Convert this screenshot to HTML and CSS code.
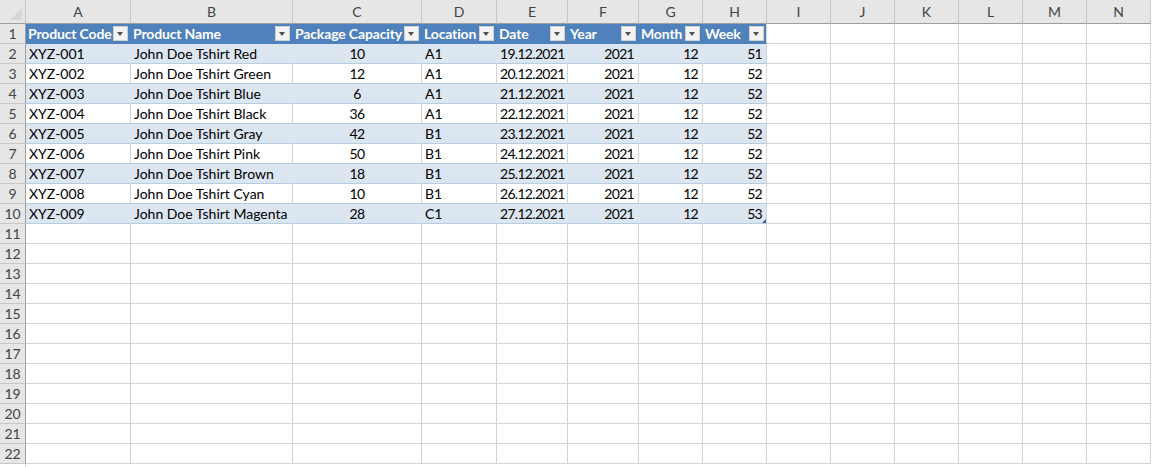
FILE: index.html
```html
<!DOCTYPE html>
<html lang="en">
<head>
<meta charset="utf-8">
<title>Products</title>
<link rel="stylesheet" href="styles.css">
</head>
<body>
<div class="sheet">
  <div class="row colhead">
    <div class="corner"><svg width="12" height="12" viewBox="0 0 12 12"><polygon points="12,0 12,12 0,12" fill="#d6d6d6"/></svg></div>
    <div class="ch">A</div><div class="ch">B</div><div class="ch">C</div><div class="ch">D</div><div class="ch">E</div><div class="ch">F</div><div class="ch">G</div><div class="ch">H</div><div class="ch">I</div><div class="ch">J</div><div class="ch">K</div><div class="ch">L</div><div class="ch">M</div><div class="ch">N</div><div class="ch">O</div>
  </div>

  <div class="row">
    <div class="rh">1</div>
    <div class="th"><span>Product Code</span><span class="dd"></span></div>
    <div class="th"><span>Product Name</span><span class="dd"></span></div>
    <div class="th"><span>Package Capacity</span><span class="dd"></span></div>
    <div class="th"><span>Location</span><span class="dd"></span></div>
    <div class="th"><span>Date</span><span class="dd"></span></div>
    <div class="th"><span>Year</span><span class="dd"></span></div>
    <div class="th"><span>Month</span><span class="dd"></span></div>
    <div class="th last"><span>Week</span><span class="dd"></span></div>
    <div class="c"></div><div class="c"></div><div class="c"></div><div class="c"></div><div class="c"></div><div class="c"></div><div class="c"></div>
  </div>

  <div class="row band">
    <div class="rh">2</div>
    <div class="t">XYZ-001</div><div class="t">John Doe Tshirt Red</div><div class="t mid">10</div><div class="t">A1</div><div class="t num">19.12.2021</div><div class="t num">2021</div><div class="t num">12</div><div class="t num last">51</div>
    <div class="c"></div><div class="c"></div><div class="c"></div><div class="c"></div><div class="c"></div><div class="c"></div><div class="c"></div>
  </div>
  <div class="row">
    <div class="rh">3</div>
    <div class="t">XYZ-002</div><div class="t">John Doe Tshirt Green</div><div class="t mid">12</div><div class="t">A1</div><div class="t num">20.12.2021</div><div class="t num">2021</div><div class="t num">12</div><div class="t num last">52</div>
    <div class="c"></div><div class="c"></div><div class="c"></div><div class="c"></div><div class="c"></div><div class="c"></div><div class="c"></div>
  </div>
  <div class="row band">
    <div class="rh">4</div>
    <div class="t">XYZ-003</div><div class="t">John Doe Tshirt Blue</div><div class="t mid">6</div><div class="t">A1</div><div class="t num">21.12.2021</div><div class="t num">2021</div><div class="t num">12</div><div class="t num last">52</div>
    <div class="c"></div><div class="c"></div><div class="c"></div><div class="c"></div><div class="c"></div><div class="c"></div><div class="c"></div>
  </div>
  <div class="row">
    <div class="rh">5</div>
    <div class="t">XYZ-004</div><div class="t">John Doe Tshirt Black</div><div class="t mid">36</div><div class="t">A1</div><div class="t num">22.12.2021</div><div class="t num">2021</div><div class="t num">12</div><div class="t num last">52</div>
    <div class="c"></div><div class="c"></div><div class="c"></div><div class="c"></div><div class="c"></div><div class="c"></div><div class="c"></div>
  </div>
  <div class="row band">
    <div class="rh">6</div>
    <div class="t">XYZ-005</div><div class="t">John Doe Tshirt Gray</div><div class="t mid">42</div><div class="t">B1</div><div class="t num">23.12.2021</div><div class="t num">2021</div><div class="t num">12</div><div class="t num last">52</div>
    <div class="c"></div><div class="c"></div><div class="c"></div><div class="c"></div><div class="c"></div><div class="c"></div><div class="c"></div>
  </div>
  <div class="row">
    <div class="rh">7</div>
    <div class="t">XYZ-006</div><div class="t">John Doe Tshirt Pink</div><div class="t mid">50</div><div class="t">B1</div><div class="t num">24.12.2021</div><div class="t num">2021</div><div class="t num">12</div><div class="t num last">52</div>
    <div class="c"></div><div class="c"></div><div class="c"></div><div class="c"></div><div class="c"></div><div class="c"></div><div class="c"></div>
  </div>
  <div class="row band">
    <div class="rh">8</div>
    <div class="t">XYZ-007</div><div class="t">John Doe Tshirt Brown</div><div class="t mid">18</div><div class="t">B1</div><div class="t num">25.12.2021</div><div class="t num">2021</div><div class="t num">12</div><div class="t num last">52</div>
    <div class="c"></div><div class="c"></div><div class="c"></div><div class="c"></div><div class="c"></div><div class="c"></div><div class="c"></div>
  </div>
  <div class="row">
    <div class="rh">9</div>
    <div class="t">XYZ-008</div><div class="t">John Doe Tshirt Cyan</div><div class="t mid">10</div><div class="t">B1</div><div class="t num">26.12.2021</div><div class="t num">2021</div><div class="t num">12</div><div class="t num last">52</div>
    <div class="c"></div><div class="c"></div><div class="c"></div><div class="c"></div><div class="c"></div><div class="c"></div><div class="c"></div>
  </div>
  <div class="row band">
    <div class="rh">10</div>
    <div class="t">XYZ-009</div><div class="t">John Doe Tshirt Magenta</div><div class="t mid">28</div><div class="t">C1</div><div class="t num">27.12.2021</div><div class="t num">2021</div><div class="t num">12</div><div class="t num last end">53</div>
    <div class="c"></div><div class="c"></div><div class="c"></div><div class="c"></div><div class="c"></div><div class="c"></div><div class="c"></div>
  </div>

  <div class="row"><div class="rh">11</div><div class="c"></div><div class="c"></div><div class="c"></div><div class="c"></div><div class="c"></div><div class="c"></div><div class="c"></div><div class="c"></div><div class="c"></div><div class="c"></div><div class="c"></div><div class="c"></div><div class="c"></div><div class="c"></div><div class="c"></div></div>
  <div class="row"><div class="rh">12</div><div class="c"></div><div class="c"></div><div class="c"></div><div class="c"></div><div class="c"></div><div class="c"></div><div class="c"></div><div class="c"></div><div class="c"></div><div class="c"></div><div class="c"></div><div class="c"></div><div class="c"></div><div class="c"></div><div class="c"></div></div>
  <div class="row"><div class="rh">13</div><div class="c"></div><div class="c"></div><div class="c"></div><div class="c"></div><div class="c"></div><div class="c"></div><div class="c"></div><div class="c"></div><div class="c"></div><div class="c"></div><div class="c"></div><div class="c"></div><div class="c"></div><div class="c"></div><div class="c"></div></div>
  <div class="row"><div class="rh">14</div><div class="c"></div><div class="c"></div><div class="c"></div><div class="c"></div><div class="c"></div><div class="c"></div><div class="c"></div><div class="c"></div><div class="c"></div><div class="c"></div><div class="c"></div><div class="c"></div><div class="c"></div><div class="c"></div><div class="c"></div></div>
  <div class="row"><div class="rh">15</div><div class="c"></div><div class="c"></div><div class="c"></div><div class="c"></div><div class="c"></div><div class="c"></div><div class="c"></div><div class="c"></div><div class="c"></div><div class="c"></div><div class="c"></div><div class="c"></div><div class="c"></div><div class="c"></div><div class="c"></div></div>
  <div class="row"><div class="rh">16</div><div class="c"></div><div class="c"></div><div class="c"></div><div class="c"></div><div class="c"></div><div class="c"></div><div class="c"></div><div class="c"></div><div class="c"></div><div class="c"></div><div class="c"></div><div class="c"></div><div class="c"></div><div class="c"></div><div class="c"></div></div>
  <div class="row"><div class="rh">17</div><div class="c"></div><div class="c"></div><div class="c"></div><div class="c"></div><div class="c"></div><div class="c"></div><div class="c"></div><div class="c"></div><div class="c"></div><div class="c"></div><div class="c"></div><div class="c"></div><div class="c"></div><div class="c"></div><div class="c"></div></div>
  <div class="row"><div class="rh">18</div><div class="c"></div><div class="c"></div><div class="c"></div><div class="c"></div><div class="c"></div><div class="c"></div><div class="c"></div><div class="c"></div><div class="c"></div><div class="c"></div><div class="c"></div><div class="c"></div><div class="c"></div><div class="c"></div><div class="c"></div></div>
  <div class="row"><div class="rh">19</div><div class="c"></div><div class="c"></div><div class="c"></div><div class="c"></div><div class="c"></div><div class="c"></div><div class="c"></div><div class="c"></div><div class="c"></div><div class="c"></div><div class="c"></div><div class="c"></div><div class="c"></div><div class="c"></div><div class="c"></div></div>
  <div class="row"><div class="rh">20</div><div class="c"></div><div class="c"></div><div class="c"></div><div class="c"></div><div class="c"></div><div class="c"></div><div class="c"></div><div class="c"></div><div class="c"></div><div class="c"></div><div class="c"></div><div class="c"></div><div class="c"></div><div class="c"></div><div class="c"></div></div>
  <div class="row"><div class="rh">21</div><div class="c"></div><div class="c"></div><div class="c"></div><div class="c"></div><div class="c"></div><div class="c"></div><div class="c"></div><div class="c"></div><div class="c"></div><div class="c"></div><div class="c"></div><div class="c"></div><div class="c"></div><div class="c"></div><div class="c"></div></div>
  <div class="row"><div class="rh">22</div><div class="c"></div><div class="c"></div><div class="c"></div><div class="c"></div><div class="c"></div><div class="c"></div><div class="c"></div><div class="c"></div><div class="c"></div><div class="c"></div><div class="c"></div><div class="c"></div><div class="c"></div><div class="c"></div><div class="c"></div></div>
</div>
</body>
</html>
```

FILE: styles.css
```css
html, body {
  margin: 0;
  padding: 0;
  background: #ffffff;
  overflow: hidden;
}

.sheet {
  width: 1156px;
  height: 467px;
  overflow: hidden;
  font-family: Lato, "Liberation Sans", sans-serif;
  font-size: 14px;
  color: #000000;
}

/* every row shares the same column widths */
.row {
  display: grid;
  grid-template-columns: 26px 105px 162px 129px 75px 71px 71px 64px 64px 64px 64px 64px 64px 64px 64px;
  height: 20px;
}

.row > div {
  box-sizing: border-box;
  height: 20px;
  border-right: 1px solid #d4d4d4;
  border-bottom: 1px solid #d4d4d4;
  line-height: 19px;
  white-space: nowrap;
  overflow: hidden;
}

/* column letters */
.colhead {
  height: 24px;
}

.colhead > div {
  height: 24px;
  line-height: 23px;
  background: #e6e6e6;
  border-right: 1px solid #c8c8c8;
  border-bottom: 1px solid #9e9e9e;
  color: #444444;
  text-align: center;
}

.corner {
  display: flex;
  align-items: flex-end;
  justify-content: flex-end;
  padding: 0 3px 3px 0;
}

.corner svg {
  display: block;
}

/* row numbers */
.row > .rh {
  background: #e6e6e6;
  border-right: 1px solid #9e9e9e;
  border-bottom: 1px solid #c8c8c8;
  color: #444444;
  text-align: center;
}

/* table header */
.row > .th {
  display: flex;
  align-items: center;
  justify-content: space-between;
  background: #4f81bd;
  border-right-color: #4f81bd;
  border-bottom-color: #4f81bd;
  color: #ffffff;
  font-weight: bold;
  letter-spacing: -0.15px;
  padding-left: 2px;
  padding-right: 2px;
}

.row > .th.last {
  border-right-color: #d4d4d4;
}

.dd {
  flex: none;
  position: relative;
  width: 15px;
  height: 15px;
  box-sizing: border-box;
  background: #f3f3f3;
  border: 1px solid #d0d0d0;
}

.dd::after {
  content: "";
  position: absolute;
  left: 3px;
  top: 5px;
  border-left: 3.5px solid transparent;
  border-right: 3.5px solid transparent;
  border-top: 4px solid #505050;
}

/* table body */
.row > .t {
  padding: 0 3px;
  border-bottom-color: #b8cce4;
}

.row > .num {
  text-align: right;
  letter-spacing: -0.7px;
  padding-right: 4px;
}

.row > .mid {
  text-align: center;
  letter-spacing: -0.5px;
}

.band > .t {
  background: #dce6f1;
  border-right-color: #dce6f1;
}

.band > .t.last {
  border-right-color: #d4d4d4;
}

.row > .t.end {
  position: relative;
}

/* resize handle in the table's last cell */
.row > .t.end::after {
  content: "";
  position: absolute;
  right: 0;
  bottom: 0;
  border-left: 4px solid transparent;
  border-bottom: 4px solid #3f5f9f;
}
```
